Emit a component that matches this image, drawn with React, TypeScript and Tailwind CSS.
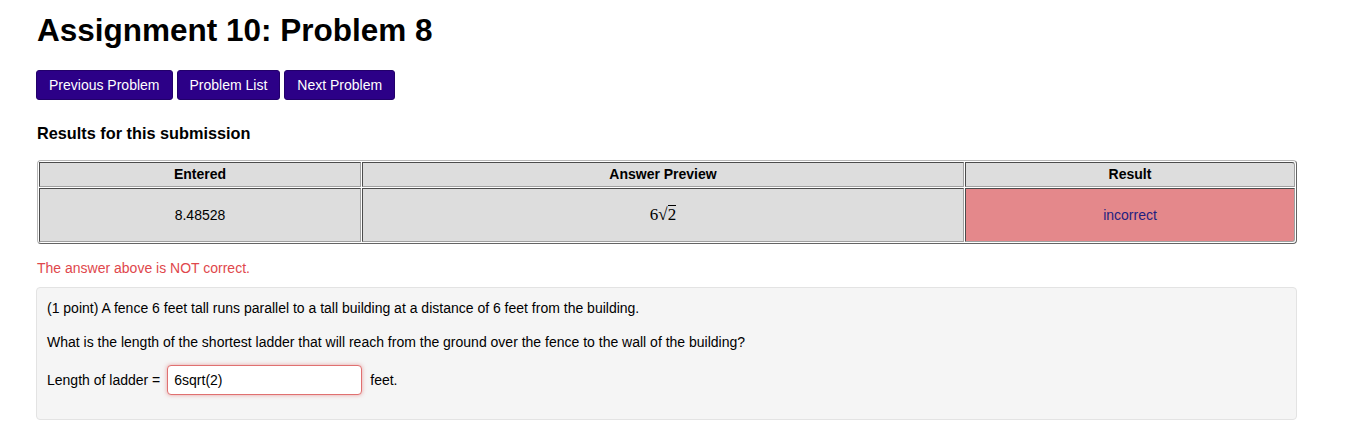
import React from "react";

export default function App() {
  const btn =
    "h-[30px] px-[12px] rounded-[3px] bg-[#2c0087] text-white text-[14px] border border-[#22006a] leading-none flex items-center";
  const cell = "bg-[#dddddd] border border-[#a0a0a0] [border-style:inset]";
  return (
    <div className="bg-white min-h-[434px] w-[1350px] text-black font-['Liberation_Sans',Arial,sans-serif]">
      <div className="pl-[37px] pr-[53px] pt-[11px]">
        <h1 className="text-[31.5px] font-bold leading-[38px] m-0">Assignment 10: Problem 8</h1>
        <div className="flex gap-[4px] mt-[21px] -ml-[1px]">
          <button className={btn}>Previous Problem</button>
          <button className={btn}>Problem List</button>
          <button className={btn}>Next Problem</button>
        </div>
        <h2 className="text-[16.3px] font-bold mt-[23px] leading-[20px]">Results for this submission</h2>
        <table className="mt-[17px] w-[1260px] border-separate border-spacing-[1px] border border-[#b8b8b8] [border-style:outset] rounded-[4px] text-[14px]">
          <thead>
            <tr>
              <th className={`w-[322px] h-[25px] font-bold ${cell}`}>Entered</th>
              <th className={`w-[602px] font-bold ${cell}`}>Answer Preview</th>
              <th className={`font-bold rounded-tr-[3px] ${cell}`}>Result</th>
            </tr>
          </thead>
          <tbody>
            <tr>
              <td className={`h-[54px] text-center ${cell}`}>8.48528</td>
              <td className={`text-center ${cell}`}>
                <span className="font-['Liberation_Serif',serif] text-[17px] inline-flex items-baseline">
                  6<span className="relative">√</span>
                  <span className="border-t border-black leading-[18px]">2</span>
                </span>
              </td>
              <td className="bg-[#e4888b] border border-[#a0a0a0] [border-style:inset] text-center text-[#1e1e80] rounded-br-[3px]">incorrect</td>
            </tr>
          </tbody>
        </table>
        <div className="text-[#e0474c] text-[14px] mt-[14px] leading-[20px]">The answer above is NOT correct.</div>
        <div className="mt-[9px] w-[1261px] -ml-[1px] h-[133px] bg-[#f5f5f5] border border-[#e3e3e3] rounded-[4px] px-[10px] pt-[10px] text-[14px] leading-[20px]">
          <p>(1 point) A fence 6 feet tall runs parallel to a tall building at a distance of 6 feet from the building.</p>
          <p className="mt-[14px]">What is the length of the shortest ladder that will reach from the ground over the fence to the wall of the building?</p>
          <div className="mt-[13px] flex items-center">
            <span>Length of ladder =</span>
            <input
              readOnly
              value="6sqrt(2)"
              className="ml-[7px] w-[195px] h-[30px] px-[6px] bg-white border border-[#e07070] rounded-[4px] shadow-[0_0_4px_rgba(220,80,80,0.5)] text-[14px] outline-none font-['Liberation_Sans',Arial,sans-serif]"
            />
            <span className="ml-[8px]">feet.</span>
          </div>
        </div>
      </div>
    </div>
  );
}
